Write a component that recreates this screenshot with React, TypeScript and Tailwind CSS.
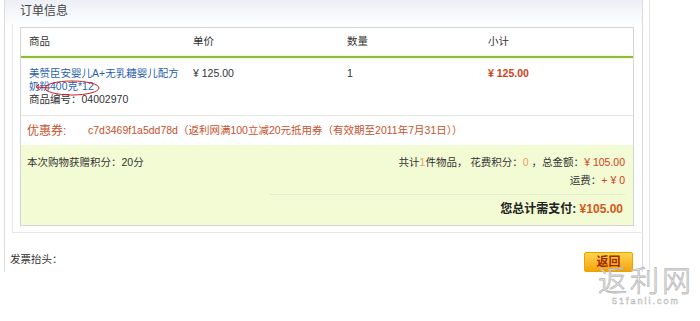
export default function App() {
  return (
    <div className="relative w-[700px] h-[321px] bg-white overflow-hidden font-['Liberation_Sans','Noto_Sans_CJK_SC',sans-serif] text-[#333] text-[10.5px]">
      <div className="ml-[4px] w-[646px] h-[272px] border-r border-[#e6e6e6]">
        <div className="w-[639px] h-full border-l border-r border-[#dcdcdc] bg-gradient-to-b from-[#eceff5] via-white via-[10%] to-white">
          <div className="h-[24px] pl-[15px] flex items-center text-[12px] text-[#444] leading-none pb-[2px]">订单信息</div>
          <div className="ml-[7px] w-[629px] border-l border-b border-[#e6e6e6] pl-[7px] pt-[3px] pb-[6px]">
            <div className="w-[614px] border border-[#d4d4d4] bg-white">
              <div className="h-[28px] flex items-center">
                <div className="w-[172px] pl-[8px]">商品</div>
                <div className="w-[154px]">单价</div>
                <div className="w-[141px]">数量</div>
                <div className="flex-1">小计</div>
              </div>
              <div className="h-[2px] bg-[#8dbd3c] shadow-[0_0_2px_#d8f08a]" />
              <div className="h-[58px] flex pt-[9px] border-b border-[#e4e4e4] leading-[13px]">
                <div className="w-[172px] pl-[8px]">
                  <div className="text-[#2b5fae]">美赞臣安婴儿A+无乳糖婴儿配方</div>
                  <div className="text-[#2b5fae]">奶粉400克*12</div>
                  <div>商品编号：04002970</div>
                </div>
                <div className="w-[154px]">¥ 125.00</div>
                <div className="w-[141px]">1</div>
                <div className="flex-1 text-[#d2401a] font-bold">¥ 125.00</div>
              </div>
              <div className="h-[29px] flex items-center pl-[6px] text-[#c9502c]">
                <div className="w-[61px] text-[12px]">优惠券:</div>
                <div>c7d3469f1a5dd78d（返利网满100立减20元抵用券（有效期至2011年7月31日））</div>
              </div>
              <div className="h-[80px] bg-[#f2fbd4] pt-[8px]">
                <div className="flex justify-between pl-[6px] pr-[8px] leading-[18px]">
                  <div>本次购物获赠积分：20分</div>
                  <div className="flex flex-col items-end">
                    <div>
                      共计<span className="text-[#e8a060]">1</span>件物品， 花费积分：<span className="text-[#e8a060]">0</span> ，总金额：<span className="text-[#d2401a]">¥ 105.00</span>
                    </div>
                    <div>
                      运费：<span className="text-[#d2401a]">+ ¥ 0</span>
                    </div>
                  </div>
                </div>
                <div className="ml-[249px] mr-[8px] h-px bg-[#e3ecc9] mt-[5px]" />
                <div className="text-right pr-[10px] text-[12px] font-bold leading-[28px] text-[#222]">
                  您总计需支付: <span className="text-[#d6581a]">¥105.00</span>
                </div>
              </div>
            </div>
          </div>
          <div className="mt-[17px] flex justify-between pl-[5px] pr-[9px]">
            <div className="leading-[16px] mt-[1px]">发票抬头：</div>
            <button className="mt-[2px] w-[49px] h-[20px] rounded-[2px] border border-[#eaa300] bg-gradient-to-b from-[#ffd54a] to-[#f5a200] text-[#a02a00] font-bold text-[12px] leading-none">
              返回
            </button>
          </div>
        </div>
      </div>

      <svg className="absolute left-0 top-0 pointer-events-none" width="700" height="321">
        <ellipse cx="72" cy="88" rx="27" ry="7" fill="none" stroke="#d0202a" strokeWidth="1" />
        <path d="M36 87 L50 88 M39 84 L36 87 L40 90" fill="none" stroke="#d0202a" strokeWidth="1" />
      </svg>

      <div className="absolute left-[598px] top-[262px] flex flex-col items-center pointer-events-none opacity-90">
        <div className="font-['Noto_Sans_CJK_SC',sans-serif] font-light text-[29px] leading-[34px] tracking-[3px] text-white [-webkit-text-stroke:0.8px_#b0b0b0]">返利网</div>
        <div className="text-[9px] leading-[10px] tracking-[2px] text-white [-webkit-text-stroke:0.5px_#b0b0b0]">51fanli.com</div>
      </div>
    </div>
  );
}
